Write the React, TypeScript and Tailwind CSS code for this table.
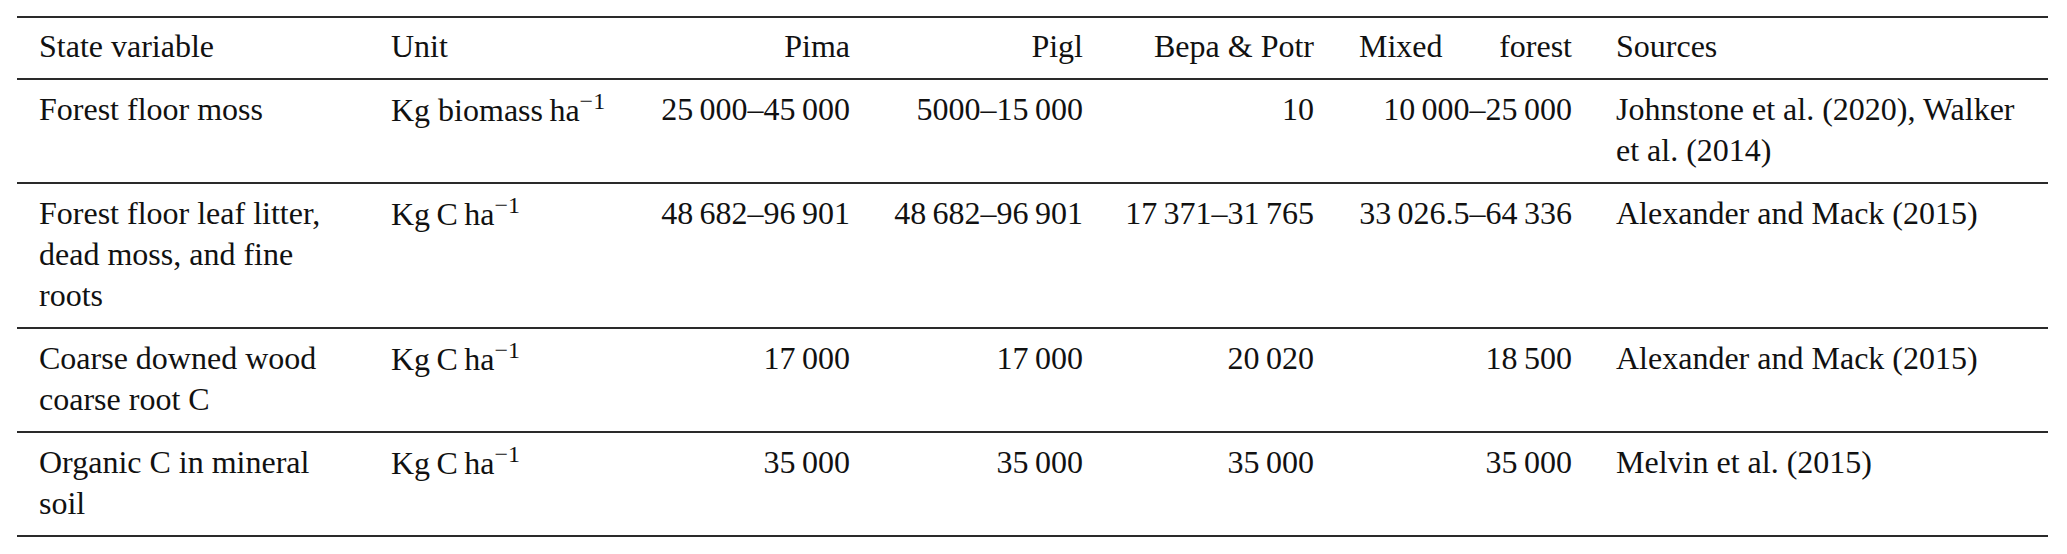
import React from "react";

const T = "\u2009";

function Sup() {
  return (
    <span className="inline-block align-[12px] text-[24px] leading-none">−1</span>
  );
}

function Unit({ kind }: { kind: "bio" | "c" }) {
  return (
    <span className="whitespace-nowrap">
      {kind === "bio" ? `Kg biomass${T}ha` : `Kg${T}C${T}ha`}
      <Sup />
    </span>
  );
}

type Row = {
  name: string[];
  unit: "bio" | "c";
  pima: string;
  pigl: string;
  bepa: string;
  mixed: string;
  sources: string[];
};

const rows: Row[] = [
  {
    name: ["Forest floor moss"],
    unit: "bio",
    pima: `25${T}000–45${T}000`,
    pigl: `5000–15${T}000`,
    bepa: "10",
    mixed: `10${T}000–25${T}000`,
    sources: ["Johnstone et al. (2020), Walker", "et al. (2014)"],
  },
  {
    name: ["Forest floor leaf litter,", "dead moss, and fine", "roots"],
    unit: "c",
    pima: `48${T}682–96${T}901`,
    pigl: `48${T}682–96${T}901`,
    bepa: `17${T}371–31${T}765`,
    mixed: `33${T}026.5–64${T}336`,
    sources: ["Alexander and Mack (2015)"],
  },
  {
    name: ["Coarse downed wood", "coarse root C"],
    unit: "c",
    pima: `17${T}000`,
    pigl: `17${T}000`,
    bepa: `20${T}020`,
    mixed: `18${T}500`,
    sources: ["Alexander and Mack (2015)"],
  },
  {
    name: ["Organic C in mineral", "soil"],
    unit: "c",
    pima: `35${T}000`,
    pigl: `35${T}000`,
    bepa: `35${T}000`,
    mixed: `35${T}000`,
    sources: ["Melvin et al. (2015)"],
  },
];

const grid =
  "grid grid-cols-[352px_261px_242px_233px_231px_258px_454px] border-b-2 border-[#2a2a2a]";

function Lines({ lines }: { lines: string[] }) {
  return (
    <>
      {lines.map((l, i) => (
        <div key={i} className="whitespace-nowrap">
          {l}
        </div>
      ))}
    </>
  );
}

export default function App() {
  return (
    <div className="w-[2067px] h-[554px] bg-white text-[#111] font-['Liberation_Serif',serif] text-[32px] leading-[41px]">
      <div className="ml-[17px] mt-[16px] w-[2031px] border-t-2 border-[#2a2a2a]">
        <div className={`${grid} pt-[8px] pb-[11px]`}>
          <div className="pl-[22px]">State variable</div>
          <div className="pl-[22px]">Unit</div>
          <div className="pr-[22px] text-right">Pima</div>
          <div className="pr-[22px] text-right">Pigl</div>
          <div className="pr-[22px] text-right whitespace-nowrap">Bepa &amp; Potr</div>
          <div className="pl-[23px] pr-[22px] flex justify-between">
            <span>Mixed</span>
            <span>forest</span>
          </div>
          <div className="pl-[22px]">Sources</div>
        </div>
        {rows.map((r, i) => (
          <div key={i} className={`${grid} pt-[9px] pb-[11px]`}>
            <div className="pl-[22px]">
              <Lines lines={r.name} />
            </div>
            <div className="pl-[22px]">
              <Unit kind={r.unit} />
            </div>
            <div className="pr-[22px] text-right whitespace-nowrap">{r.pima}</div>
            <div className="pr-[22px] text-right whitespace-nowrap">{r.pigl}</div>
            <div className="pr-[22px] text-right whitespace-nowrap">{r.bepa}</div>
            <div className="pr-[22px] text-right whitespace-nowrap">{r.mixed}</div>
            <div className="pl-[22px]">
              <Lines lines={r.sources} />
            </div>
          </div>
        ))}
      </div>
    </div>
  );
}
